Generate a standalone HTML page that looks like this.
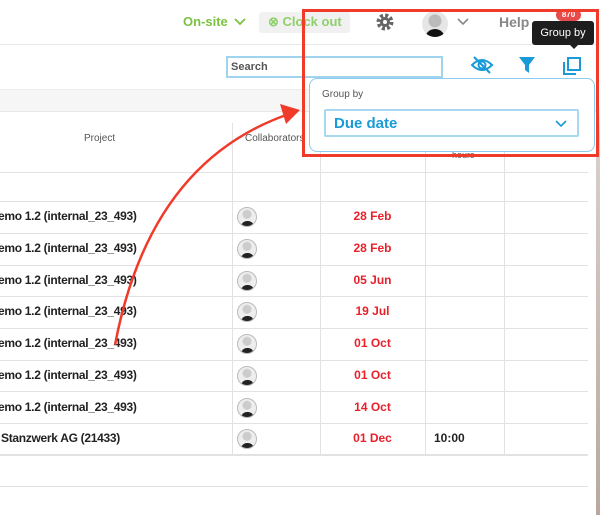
<!DOCTYPE html>
<html><head><meta charset="utf-8"><style>
*{box-sizing:border-box;margin:0;padding:0}
body{width:600px;height:515px;overflow:hidden;background:#fff;font-family:"Liberation Sans",sans-serif;position:relative;color:#222}
.a{position:absolute}
.hl{position:absolute;height:1px;background:#e2e2e2}
.vl{position:absolute;width:1px;background:#e2e2e2}
.proj{position:absolute;left:-2px;font-size:12px;font-weight:bold;color:#222;letter-spacing:-0.3px}
.date{position:absolute;left:320px;width:105px;text-align:center;font-size:12px;font-weight:bold;color:#e8202a}
.av{position:absolute;left:237px;width:20px;height:20px;border-radius:50%;background:radial-gradient(circle at 50% 35%,#ccc 0 4px,#eee 5px);border:1px solid #bbb;overflow:hidden}
.av::after{content:"";position:absolute;left:3px;top:13px;width:13px;height:8px;border-radius:6px 6px 0 0;background:#222}
</style></head><body>
<!-- top bar -->
<div class="a" style="left:183px;top:14px;font-size:13px;font-weight:bold;color:#7cc242">On-site</div>
<svg class="a" style="left:234px;top:18px" width="12" height="8" viewBox="0 0 12 8"><path d="M1 1 L6 6 L11 1" fill="none" stroke="#7cc242" stroke-width="1.8"/></svg>
<div class="a" style="left:259px;top:12px;width:91px;height:21px;background:#f1f1f1;border-radius:3px"></div>
<div class="a" style="left:268px;top:14px;font-size:13px;font-weight:bold;color:#8ed06a">⊗ Clock out</div>
<svg class="a" style="left:375px;top:12px" width="20" height="20" viewBox="0 0 20 20"><circle cx="10" cy="10" r="6.5" fill="none" stroke="#666" stroke-width="4" stroke-dasharray="3 2.1"/><circle cx="10" cy="10" r="5" fill="#666"/><circle cx="10" cy="10" r="2" fill="#fff"/></svg>
<div class="a" style="left:422px;top:11px;width:26px;height:26px;border-radius:50%;background:radial-gradient(circle at 50% 38%,#bbb 0 6px,#e6e6e6 7px);overflow:hidden"><div class="a" style="left:3px;top:18px;width:20px;height:12px;border-radius:10px 10px 0 0;background:#111"></div></div>
<svg class="a" style="left:457px;top:18px" width="12" height="8" viewBox="0 0 12 8"><path d="M1 1 L6 6 L11 1" fill="none" stroke="#888" stroke-width="1.6"/></svg>
<div class="a" style="left:499px;top:14px;font-size:14px;font-weight:bold;color:#888">Help</div>
<div class="hl" style="left:0;top:44px;width:600px;background:#e8e8e8"></div>
<div class="a" style="left:556px;top:9px;width:25px;height:12px;border-radius:6px;background:#e84b4b;color:#fff;font-size:8px;font-weight:bold;text-align:center;line-height:12px">870</div>
<div class="a" style="left:532px;top:21px;width:62px;height:24px;background:#1e1e1e;border-radius:3px;color:#fff;font-size:11px;text-align:center;line-height:24px">Group by</div>
<div class="a" style="left:569px;top:44px;width:0;height:0;border:5px solid transparent;border-top-color:#1e1e1e"></div>
<!-- toolbar -->
<div class="a" style="left:226px;top:56px;width:217px;height:22px;border:2px solid #9fd3ee"></div>
<div class="a" style="left:231px;top:61px;font-size:11px;font-weight:bold;color:#555">Search</div>
<svg class="a" style="left:470px;top:55px" width="24" height="20" viewBox="0 0 24 20"><path d="M2 10 Q12 0 22 10 Q12 20 2 10Z" fill="none" stroke="#1a9ad6" stroke-width="2"/><circle cx="12" cy="10" r="3.5" fill="none" stroke="#1a9ad6" stroke-width="2"/><path d="M4 2 L20 18" stroke="#1a9ad6" stroke-width="2.2"/></svg>
<svg class="a" style="left:518px;top:56px" width="18" height="18" viewBox="0 0 18 18"><path d="M1 1 H17 L11 9 V17 L7 14 V9Z" fill="#1a9ad6"/></svg>
<svg class="a" style="left:562px;top:56px" width="20" height="20" viewBox="0 0 20 20"><rect x="6" y="2" width="12" height="12" fill="none" stroke="#1a9ad6" stroke-width="2"/><path d="M2 6 V18 H14" fill="none" stroke="#1a9ad6" stroke-width="2"/></svg>
<div class="a" style="left:0;top:89px;width:600px;height:23px;background:#f6f6f6;border-top:1px solid #ececec;border-bottom:1px solid #e6e6e6"></div>
<!-- table header -->
<div class="a" style="left:84px;top:133px;font-size:10px;color:#555">Project</div>
<div class="a" style="left:245px;top:133px;font-size:10px;color:#555">Collaborators</div>
<div class="a" style="left:452px;top:150px;font-size:9px;color:#555">hours</div>
<div class="hl" style="left:0;top:172px;width:588px"></div>
<div class="hl" style="left:0;top:201px;width:588px"></div>
<div class="vl" style="left:232px;top:123px;height:332px"></div>
<div class="vl" style="left:320px;top:123px;height:332px"></div>
<div class="vl" style="left:425px;top:123px;height:332px"></div>
<div class="vl" style="left:504px;top:123px;height:332px"></div>
<div class="hl" style="left:0;top:233px;width:588px"></div>
<div class="hl" style="left:0;top:265px;width:588px"></div>
<div class="hl" style="left:0;top:296px;width:588px"></div>
<div class="hl" style="left:0;top:328px;width:588px"></div>
<div class="hl" style="left:0;top:360px;width:588px"></div>
<div class="hl" style="left:0;top:391px;width:588px"></div>
<div class="hl" style="left:0;top:423px;width:588px"></div>
<div class="hl" style="left:0;top:454px;width:588px;height:2px"></div>
<div class="hl" style="left:0;top:486px;width:588px"></div>
<div class="a" style="left:596px;top:0;width:4px;height:515px;background:linear-gradient(#fff 0 100px,#d8d0cc 140px,#b8a8a0)"></div>

<div class="proj" style="top:209px">emo 1.2 (internal_23_493)</div><div class="av" style="top:207px"></div><div class="date" style="top:209px">28 Feb</div>
<div class="proj" style="top:241px">emo 1.2 (internal_23_493)</div><div class="av" style="top:239px"></div><div class="date" style="top:241px">28 Feb</div>
<div class="proj" style="top:273px">emo 1.2 (internal_23_493)</div><div class="av" style="top:271px"></div><div class="date" style="top:273px">05 Jun</div>
<div class="proj" style="top:304px">emo 1.2 (internal_23_493)</div><div class="av" style="top:302px"></div><div class="date" style="top:304px">19 Jul</div>
<div class="proj" style="top:336px">emo 1.2 (internal_23_493)</div><div class="av" style="top:334px"></div><div class="date" style="top:336px">01 Oct</div>
<div class="proj" style="top:368px">emo 1.2 (internal_23_493)</div><div class="av" style="top:366px"></div><div class="date" style="top:368px">01 Oct</div>
<div class="proj" style="top:400px">emo 1.2 (internal_23_493)</div><div class="av" style="top:398px"></div><div class="date" style="top:400px">14 Oct</div>
<div class="proj" style="top:431px;left:1px">Stanzwerk AG (21433)</div><div class="av" style="top:429px"></div><div class="date" style="top:431px">01 Dec</div>
<div class="a" style="left:434px;top:431px;font-size:12px;font-weight:bold">10:00</div>

<!-- popup -->
<div class="a" style="left:309px;top:78px;width:286px;height:74px;background:#fff;border:1px solid #8ccbee;border-radius:8px"></div>
<div class="a" style="left:322px;top:89px;font-size:10px;color:#555">Group by</div>
<div class="a" style="left:324px;top:109px;width:255px;height:28px;border:2px solid #a8d8f0;border-radius:2px"></div>
<div class="a" style="left:334px;top:115px;font-size:15px;font-weight:bold;color:#1a9ad6">Due date</div>
<svg class="a" style="left:555px;top:120px" width="12" height="8" viewBox="0 0 12 8"><path d="M1 1 L6 6 L11 1" fill="none" stroke="#1a9ad6" stroke-width="1.6"/></svg>
<!-- annotation -->
<svg class="a" style="left:0;top:0" width="600" height="515" viewBox="0 0 600 515">
<rect x="303.5" y="10.5" width="294" height="145" fill="none" stroke="#f03a2a" stroke-width="3"/>
<path d="M115 345 Q150 160 292 113" fill="none" stroke="#f03a2a" stroke-width="2.5"/>
<path d="M300 110 L280 104 L286 124Z" fill="#f03a2a"/>
</svg>
</body></html>
